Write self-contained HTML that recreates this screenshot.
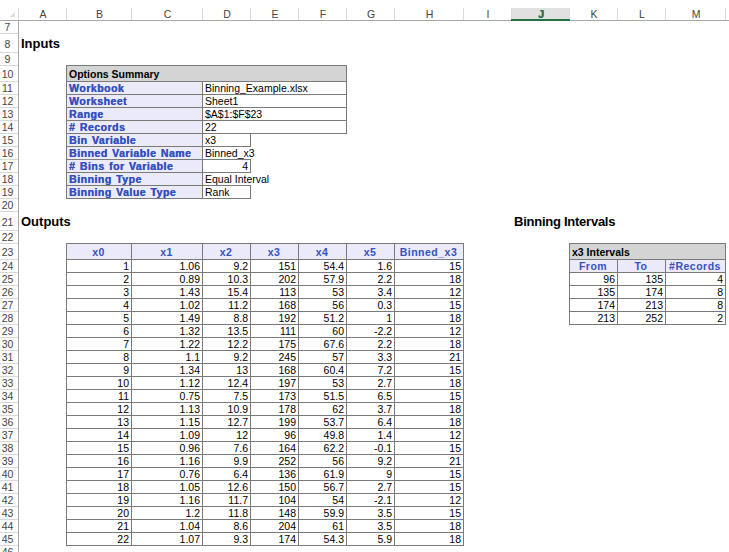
<!DOCTYPE html>
<html><head><meta charset="utf-8"><style>
html,body{margin:0;padding:0;background:#fff;}
body{width:729px;height:552px;position:relative;overflow:hidden;font-family:"Liberation Sans", sans-serif;}
body>div,body>svg{position:absolute;}
</style></head><body>
<div style="left:511px;top:8px;width:59px;height:12px;background:#e1e1e1"></div>
<div style="left:66px;top:8px;width:1px;height:12px;background:#dadada"></div>
<div style="left:131px;top:8px;width:1px;height:12px;background:#dadada"></div>
<div style="left:202px;top:8px;width:1px;height:12px;background:#dadada"></div>
<div style="left:250px;top:8px;width:1px;height:12px;background:#dadada"></div>
<div style="left:298px;top:8px;width:1px;height:12px;background:#dadada"></div>
<div style="left:346px;top:8px;width:1px;height:12px;background:#dadada"></div>
<div style="left:394px;top:8px;width:1px;height:12px;background:#dadada"></div>
<div style="left:463px;top:8px;width:1px;height:12px;background:#dadada"></div>
<div style="left:511px;top:8px;width:1px;height:12px;background:#dadada"></div>
<div style="left:569px;top:8px;width:1px;height:12px;background:#dadada"></div>
<div style="left:617px;top:8px;width:1px;height:12px;background:#dadada"></div>
<div style="left:665px;top:8px;width:1px;height:12px;background:#dadada"></div>
<div style="left:725px;top:8px;width:1px;height:12px;background:#dadada"></div>
<div style="left:18px;top:8px;width:1px;height:12px;background:#dadada"></div>
<div style="left:0px;top:20px;width:730px;height:1px;background:#a8a8a8"></div>
<div style="left:511px;top:19px;width:59px;height:2px;background:#217346"></div>
<div style="left:20px;top:8.91px;width:46px;font-size:10.5px;line-height:10.5px;color:#444;text-align:center;white-space:nowrap;">A</div>
<div style="left:68px;top:8.91px;width:63px;font-size:10.5px;line-height:10.5px;color:#444;text-align:center;white-space:nowrap;">B</div>
<div style="left:133px;top:8.91px;width:69px;font-size:10.5px;line-height:10.5px;color:#444;text-align:center;white-space:nowrap;">C</div>
<div style="left:204px;top:8.91px;width:46px;font-size:10.5px;line-height:10.5px;color:#444;text-align:center;white-space:nowrap;">D</div>
<div style="left:252px;top:8.91px;width:46px;font-size:10.5px;line-height:10.5px;color:#444;text-align:center;white-space:nowrap;">E</div>
<div style="left:300px;top:8.91px;width:46px;font-size:10.5px;line-height:10.5px;color:#444;text-align:center;white-space:nowrap;">F</div>
<div style="left:348px;top:8.91px;width:46px;font-size:10.5px;line-height:10.5px;color:#444;text-align:center;white-space:nowrap;">G</div>
<div style="left:396px;top:8.91px;width:67px;font-size:10.5px;line-height:10.5px;color:#444;text-align:center;white-space:nowrap;">H</div>
<div style="left:465px;top:8.91px;width:46px;font-size:10.5px;line-height:10.5px;color:#444;text-align:center;white-space:nowrap;">I</div>
<div style="left:513px;top:8.91px;width:56px;font-size:10.5px;line-height:10.5px;color:#217346;text-align:center;white-space:nowrap;font-weight:bold;text-shadow:0.4px 0 0 #217346;">J</div>
<div style="left:571px;top:8.91px;width:46px;font-size:10.5px;line-height:10.5px;color:#444;text-align:center;white-space:nowrap;">K</div>
<div style="left:619px;top:8.91px;width:46px;font-size:10.5px;line-height:10.5px;color:#444;text-align:center;white-space:nowrap;">L</div>
<div style="left:667px;top:8.91px;width:58px;font-size:10.5px;line-height:10.5px;color:#444;text-align:center;white-space:nowrap;">M</div>
<svg style="left:10px;top:12px;width:6px;height:6px" width="6" height="6"><polygon points="5,0 5,5 0,5" fill="#dcdcdc"/></svg>
<div style="left:18px;top:20px;width:1px;height:533px;background:#a8a8a8"></div>
<div style="left:0px;top:33px;width:18px;height:1px;background:#d8d8d8"></div>
<div style="left:0px;top:21.91px;width:15px;font-size:10.5px;line-height:10.5px;color:#444;text-align:center;white-space:nowrap;">7</div>
<div style="left:0px;top:52px;width:18px;height:1px;background:#d8d8d8"></div>
<div style="left:0px;top:39.31px;width:15px;font-size:10.5px;line-height:10.5px;color:#444;text-align:center;white-space:nowrap;">8</div>
<div style="left:0px;top:65px;width:18px;height:1px;background:#d8d8d8"></div>
<div style="left:0px;top:53.91px;width:15px;font-size:10.5px;line-height:10.5px;color:#444;text-align:center;white-space:nowrap;">9</div>
<div style="left:0px;top:81px;width:18px;height:1px;background:#d8d8d8"></div>
<div style="left:0px;top:68.91px;width:15px;font-size:10.5px;line-height:10.5px;color:#444;text-align:center;white-space:nowrap;">10</div>
<div style="left:0px;top:94px;width:18px;height:1px;background:#d8d8d8"></div>
<div style="left:0px;top:82.91px;width:15px;font-size:10.5px;line-height:10.5px;color:#444;text-align:center;white-space:nowrap;">11</div>
<div style="left:0px;top:107px;width:18px;height:1px;background:#d8d8d8"></div>
<div style="left:0px;top:95.91px;width:15px;font-size:10.5px;line-height:10.5px;color:#444;text-align:center;white-space:nowrap;">12</div>
<div style="left:0px;top:120px;width:18px;height:1px;background:#d8d8d8"></div>
<div style="left:0px;top:108.91px;width:15px;font-size:10.5px;line-height:10.5px;color:#444;text-align:center;white-space:nowrap;">13</div>
<div style="left:0px;top:133px;width:18px;height:1px;background:#d8d8d8"></div>
<div style="left:0px;top:121.91px;width:15px;font-size:10.5px;line-height:10.5px;color:#444;text-align:center;white-space:nowrap;">14</div>
<div style="left:0px;top:146px;width:18px;height:1px;background:#d8d8d8"></div>
<div style="left:0px;top:134.91px;width:15px;font-size:10.5px;line-height:10.5px;color:#444;text-align:center;white-space:nowrap;">15</div>
<div style="left:0px;top:159px;width:18px;height:1px;background:#d8d8d8"></div>
<div style="left:0px;top:147.91px;width:15px;font-size:10.5px;line-height:10.5px;color:#444;text-align:center;white-space:nowrap;">16</div>
<div style="left:0px;top:172px;width:18px;height:1px;background:#d8d8d8"></div>
<div style="left:0px;top:160.91px;width:15px;font-size:10.5px;line-height:10.5px;color:#444;text-align:center;white-space:nowrap;">17</div>
<div style="left:0px;top:185px;width:18px;height:1px;background:#d8d8d8"></div>
<div style="left:0px;top:173.91px;width:15px;font-size:10.5px;line-height:10.5px;color:#444;text-align:center;white-space:nowrap;">18</div>
<div style="left:0px;top:198px;width:18px;height:1px;background:#d8d8d8"></div>
<div style="left:0px;top:186.91px;width:15px;font-size:10.5px;line-height:10.5px;color:#444;text-align:center;white-space:nowrap;">19</div>
<div style="left:0px;top:211px;width:18px;height:1px;background:#d8d8d8"></div>
<div style="left:0px;top:199.91px;width:15px;font-size:10.5px;line-height:10.5px;color:#444;text-align:center;white-space:nowrap;">20</div>
<div style="left:0px;top:230px;width:18px;height:1px;background:#d8d8d8"></div>
<div style="left:0px;top:217.31px;width:15px;font-size:10.5px;line-height:10.5px;color:#444;text-align:center;white-space:nowrap;">21</div>
<div style="left:0px;top:243px;width:18px;height:1px;background:#d8d8d8"></div>
<div style="left:0px;top:231.91px;width:15px;font-size:10.5px;line-height:10.5px;color:#444;text-align:center;white-space:nowrap;">22</div>
<div style="left:0px;top:259px;width:18px;height:1px;background:#d8d8d8"></div>
<div style="left:0px;top:246.91px;width:15px;font-size:10.5px;line-height:10.5px;color:#444;text-align:center;white-space:nowrap;">23</div>
<div style="left:0px;top:272px;width:18px;height:1px;background:#d8d8d8"></div>
<div style="left:0px;top:260.91px;width:15px;font-size:10.5px;line-height:10.5px;color:#444;text-align:center;white-space:nowrap;">24</div>
<div style="left:0px;top:285px;width:18px;height:1px;background:#d8d8d8"></div>
<div style="left:0px;top:273.91px;width:15px;font-size:10.5px;line-height:10.5px;color:#444;text-align:center;white-space:nowrap;">25</div>
<div style="left:0px;top:298px;width:18px;height:1px;background:#d8d8d8"></div>
<div style="left:0px;top:286.91px;width:15px;font-size:10.5px;line-height:10.5px;color:#444;text-align:center;white-space:nowrap;">26</div>
<div style="left:0px;top:311px;width:18px;height:1px;background:#d8d8d8"></div>
<div style="left:0px;top:299.91px;width:15px;font-size:10.5px;line-height:10.5px;color:#444;text-align:center;white-space:nowrap;">27</div>
<div style="left:0px;top:324px;width:18px;height:1px;background:#d8d8d8"></div>
<div style="left:0px;top:312.91px;width:15px;font-size:10.5px;line-height:10.5px;color:#444;text-align:center;white-space:nowrap;">28</div>
<div style="left:0px;top:337px;width:18px;height:1px;background:#d8d8d8"></div>
<div style="left:0px;top:325.91px;width:15px;font-size:10.5px;line-height:10.5px;color:#444;text-align:center;white-space:nowrap;">29</div>
<div style="left:0px;top:350px;width:18px;height:1px;background:#d8d8d8"></div>
<div style="left:0px;top:338.91px;width:15px;font-size:10.5px;line-height:10.5px;color:#444;text-align:center;white-space:nowrap;">30</div>
<div style="left:0px;top:363px;width:18px;height:1px;background:#d8d8d8"></div>
<div style="left:0px;top:351.91px;width:15px;font-size:10.5px;line-height:10.5px;color:#444;text-align:center;white-space:nowrap;">31</div>
<div style="left:0px;top:376px;width:18px;height:1px;background:#d8d8d8"></div>
<div style="left:0px;top:364.91px;width:15px;font-size:10.5px;line-height:10.5px;color:#444;text-align:center;white-space:nowrap;">32</div>
<div style="left:0px;top:389px;width:18px;height:1px;background:#d8d8d8"></div>
<div style="left:0px;top:377.91px;width:15px;font-size:10.5px;line-height:10.5px;color:#444;text-align:center;white-space:nowrap;">33</div>
<div style="left:0px;top:402px;width:18px;height:1px;background:#d8d8d8"></div>
<div style="left:0px;top:390.91px;width:15px;font-size:10.5px;line-height:10.5px;color:#444;text-align:center;white-space:nowrap;">34</div>
<div style="left:0px;top:415px;width:18px;height:1px;background:#d8d8d8"></div>
<div style="left:0px;top:403.91px;width:15px;font-size:10.5px;line-height:10.5px;color:#444;text-align:center;white-space:nowrap;">35</div>
<div style="left:0px;top:428px;width:18px;height:1px;background:#d8d8d8"></div>
<div style="left:0px;top:416.91px;width:15px;font-size:10.5px;line-height:10.5px;color:#444;text-align:center;white-space:nowrap;">36</div>
<div style="left:0px;top:441px;width:18px;height:1px;background:#d8d8d8"></div>
<div style="left:0px;top:429.91px;width:15px;font-size:10.5px;line-height:10.5px;color:#444;text-align:center;white-space:nowrap;">37</div>
<div style="left:0px;top:454px;width:18px;height:1px;background:#d8d8d8"></div>
<div style="left:0px;top:442.91px;width:15px;font-size:10.5px;line-height:10.5px;color:#444;text-align:center;white-space:nowrap;">38</div>
<div style="left:0px;top:467px;width:18px;height:1px;background:#d8d8d8"></div>
<div style="left:0px;top:455.91px;width:15px;font-size:10.5px;line-height:10.5px;color:#444;text-align:center;white-space:nowrap;">39</div>
<div style="left:0px;top:480px;width:18px;height:1px;background:#d8d8d8"></div>
<div style="left:0px;top:468.91px;width:15px;font-size:10.5px;line-height:10.5px;color:#444;text-align:center;white-space:nowrap;">40</div>
<div style="left:0px;top:493px;width:18px;height:1px;background:#d8d8d8"></div>
<div style="left:0px;top:481.91px;width:15px;font-size:10.5px;line-height:10.5px;color:#444;text-align:center;white-space:nowrap;">41</div>
<div style="left:0px;top:506px;width:18px;height:1px;background:#d8d8d8"></div>
<div style="left:0px;top:494.91px;width:15px;font-size:10.5px;line-height:10.5px;color:#444;text-align:center;white-space:nowrap;">42</div>
<div style="left:0px;top:519px;width:18px;height:1px;background:#d8d8d8"></div>
<div style="left:0px;top:507.91px;width:15px;font-size:10.5px;line-height:10.5px;color:#444;text-align:center;white-space:nowrap;">43</div>
<div style="left:0px;top:532px;width:18px;height:1px;background:#d8d8d8"></div>
<div style="left:0px;top:520.91px;width:15px;font-size:10.5px;line-height:10.5px;color:#444;text-align:center;white-space:nowrap;">44</div>
<div style="left:0px;top:545px;width:18px;height:1px;background:#d8d8d8"></div>
<div style="left:0px;top:533.91px;width:15px;font-size:10.5px;line-height:10.5px;color:#444;text-align:center;white-space:nowrap;">45</div>
<div style="left:0px;top:558px;width:18px;height:1px;background:#d8d8d8"></div>
<div style="left:0px;top:546.91px;width:15px;font-size:10.5px;line-height:10.5px;color:#444;text-align:center;white-space:nowrap;">46</div>
<div style="left:18px;top:36.70px;width:182px;font-size:13px;line-height:13px;color:#000;text-align:left;white-space:nowrap;font-weight:bold;padding-left:3px;box-sizing:border-box;">Inputs</div>
<div style="left:18px;top:214.60px;width:182px;font-size:13px;line-height:13px;color:#000;text-align:left;white-space:nowrap;font-weight:bold;padding-left:3px;box-sizing:border-box;">Outputs</div>
<div style="left:511px;top:214.60px;width:189px;font-size:13px;line-height:13px;color:#000;text-align:left;white-space:nowrap;font-weight:bold;padding-left:3px;box-sizing:border-box;letter-spacing:-0.25px;">Binning Intervals</div>
<div style="left:66px;top:65px;width:280px;height:16px;background:#d4d4d4"></div>
<div style="left:66px;top:68.81px;width:280px;font-size:10.5px;line-height:10.5px;color:#000;text-align:left;white-space:nowrap;font-weight:bold;padding-left:3px;box-sizing:border-box;">Options Summary</div>
<div style="left:66px;top:81px;width:136px;height:13px;background:#eaeaf9"></div>
<div style="left:66px;top:82.91px;width:136px;font-size:10.5px;line-height:10.5px;color:#3350c0;text-align:left;white-space:nowrap;font-weight:bold;padding-left:3px;box-sizing:border-box;letter-spacing:0.5px;word-spacing:1px;text-shadow:0.35px 0 0 #3350c0;">Workbook</div>
<div style="left:202px;top:82.91px;width:198px;font-size:10.5px;line-height:10.5px;color:#000;text-align:left;white-space:nowrap;padding-left:3px;box-sizing:border-box;">Binning_Example.xlsx</div>
<div style="left:66px;top:94px;width:136px;height:13px;background:#eaeaf9"></div>
<div style="left:66px;top:95.91px;width:136px;font-size:10.5px;line-height:10.5px;color:#3350c0;text-align:left;white-space:nowrap;font-weight:bold;padding-left:3px;box-sizing:border-box;letter-spacing:0.5px;word-spacing:1px;text-shadow:0.35px 0 0 #3350c0;">Worksheet</div>
<div style="left:202px;top:95.91px;width:198px;font-size:10.5px;line-height:10.5px;color:#000;text-align:left;white-space:nowrap;padding-left:3px;box-sizing:border-box;">Sheet1</div>
<div style="left:66px;top:107px;width:136px;height:13px;background:#eaeaf9"></div>
<div style="left:66px;top:108.91px;width:136px;font-size:10.5px;line-height:10.5px;color:#3350c0;text-align:left;white-space:nowrap;font-weight:bold;padding-left:3px;box-sizing:border-box;letter-spacing:0.5px;word-spacing:1px;text-shadow:0.35px 0 0 #3350c0;">Range</div>
<div style="left:202px;top:108.91px;width:198px;font-size:10.5px;line-height:10.5px;color:#000;text-align:left;white-space:nowrap;padding-left:3px;box-sizing:border-box;">$A$1:$F$23</div>
<div style="left:66px;top:120px;width:136px;height:13px;background:#eaeaf9"></div>
<div style="left:66px;top:121.91px;width:136px;font-size:10.5px;line-height:10.5px;color:#3350c0;text-align:left;white-space:nowrap;font-weight:bold;padding-left:3px;box-sizing:border-box;letter-spacing:0.5px;word-spacing:1px;text-shadow:0.35px 0 0 #3350c0;"># Records</div>
<div style="left:202px;top:121.91px;width:198px;font-size:10.5px;line-height:10.5px;color:#000;text-align:left;white-space:nowrap;padding-left:3px;box-sizing:border-box;">22</div>
<div style="left:66px;top:133px;width:136px;height:13px;background:#eaeaf9"></div>
<div style="left:66px;top:134.91px;width:136px;font-size:10.5px;line-height:10.5px;color:#3350c0;text-align:left;white-space:nowrap;font-weight:bold;padding-left:3px;box-sizing:border-box;letter-spacing:0.5px;word-spacing:1px;text-shadow:0.35px 0 0 #3350c0;">Bin Variable</div>
<div style="left:202px;top:134.91px;width:198px;font-size:10.5px;line-height:10.5px;color:#000;text-align:left;white-space:nowrap;padding-left:3px;box-sizing:border-box;">x3</div>
<div style="left:66px;top:146px;width:136px;height:13px;background:#eaeaf9"></div>
<div style="left:66px;top:147.91px;width:136px;font-size:10.5px;line-height:10.5px;color:#3350c0;text-align:left;white-space:nowrap;font-weight:bold;padding-left:3px;box-sizing:border-box;letter-spacing:0.5px;word-spacing:1px;text-shadow:0.35px 0 0 #3350c0;">Binned Variable Name</div>
<div style="left:202px;top:147.91px;width:198px;font-size:10.5px;line-height:10.5px;color:#000;text-align:left;white-space:nowrap;padding-left:3px;box-sizing:border-box;">Binned_x3</div>
<div style="left:66px;top:159px;width:136px;height:13px;background:#eaeaf9"></div>
<div style="left:66px;top:160.91px;width:136px;font-size:10.5px;line-height:10.5px;color:#3350c0;text-align:left;white-space:nowrap;font-weight:bold;padding-left:3px;box-sizing:border-box;letter-spacing:0.5px;word-spacing:1px;text-shadow:0.35px 0 0 #3350c0;"># Bins for Variable</div>
<div style="left:202px;top:160.91px;width:48px;font-size:10.5px;line-height:10.5px;color:#000;text-align:right;white-space:nowrap;padding-right:2px;box-sizing:border-box;">4</div>
<div style="left:66px;top:172px;width:136px;height:13px;background:#eaeaf9"></div>
<div style="left:66px;top:173.91px;width:136px;font-size:10.5px;line-height:10.5px;color:#3350c0;text-align:left;white-space:nowrap;font-weight:bold;padding-left:3px;box-sizing:border-box;letter-spacing:0.5px;word-spacing:1px;text-shadow:0.35px 0 0 #3350c0;">Binning Type</div>
<div style="left:202px;top:173.91px;width:198px;font-size:10.5px;line-height:10.5px;color:#000;text-align:left;white-space:nowrap;padding-left:3px;box-sizing:border-box;">Equal Interval</div>
<div style="left:66px;top:185px;width:136px;height:13px;background:#eaeaf9"></div>
<div style="left:66px;top:186.91px;width:136px;font-size:10.5px;line-height:10.5px;color:#3350c0;text-align:left;white-space:nowrap;font-weight:bold;padding-left:3px;box-sizing:border-box;letter-spacing:0.5px;word-spacing:1px;text-shadow:0.35px 0 0 #3350c0;">Binning Value Type</div>
<div style="left:202px;top:186.91px;width:198px;font-size:10.5px;line-height:10.5px;color:#000;text-align:left;white-space:nowrap;padding-left:3px;box-sizing:border-box;">Rank</div>
<div style="left:66px;top:65px;width:281px;height:1px;background:#7a7a7a"></div>
<div style="left:66px;top:81px;width:281px;height:1px;background:#7a7a7a"></div>
<div style="left:66px;top:94px;width:281px;height:1px;background:#7a7a7a"></div>
<div style="left:66px;top:81px;width:1px;height:14px;background:#7a7a7a"></div>
<div style="left:202px;top:81px;width:1px;height:14px;background:#7a7a7a"></div>
<div style="left:346px;top:81px;width:1px;height:14px;background:#7a7a7a"></div>
<div style="left:66px;top:107px;width:281px;height:1px;background:#7a7a7a"></div>
<div style="left:66px;top:94px;width:1px;height:14px;background:#7a7a7a"></div>
<div style="left:202px;top:94px;width:1px;height:14px;background:#7a7a7a"></div>
<div style="left:346px;top:94px;width:1px;height:14px;background:#7a7a7a"></div>
<div style="left:66px;top:120px;width:281px;height:1px;background:#7a7a7a"></div>
<div style="left:66px;top:107px;width:1px;height:14px;background:#7a7a7a"></div>
<div style="left:202px;top:107px;width:1px;height:14px;background:#7a7a7a"></div>
<div style="left:346px;top:107px;width:1px;height:14px;background:#7a7a7a"></div>
<div style="left:66px;top:133px;width:281px;height:1px;background:#7a7a7a"></div>
<div style="left:66px;top:120px;width:1px;height:14px;background:#7a7a7a"></div>
<div style="left:202px;top:120px;width:1px;height:14px;background:#7a7a7a"></div>
<div style="left:346px;top:120px;width:1px;height:14px;background:#7a7a7a"></div>
<div style="left:66px;top:146px;width:185px;height:1px;background:#7a7a7a"></div>
<div style="left:66px;top:133px;width:1px;height:14px;background:#7a7a7a"></div>
<div style="left:202px;top:133px;width:1px;height:14px;background:#7a7a7a"></div>
<div style="left:250px;top:133px;width:1px;height:14px;background:#7a7a7a"></div>
<div style="left:66px;top:159px;width:185px;height:1px;background:#7a7a7a"></div>
<div style="left:66px;top:146px;width:1px;height:14px;background:#7a7a7a"></div>
<div style="left:202px;top:146px;width:1px;height:14px;background:#7a7a7a"></div>
<div style="left:66px;top:172px;width:185px;height:1px;background:#7a7a7a"></div>
<div style="left:66px;top:159px;width:1px;height:14px;background:#7a7a7a"></div>
<div style="left:202px;top:159px;width:1px;height:14px;background:#7a7a7a"></div>
<div style="left:250px;top:159px;width:1px;height:14px;background:#7a7a7a"></div>
<div style="left:66px;top:185px;width:185px;height:1px;background:#7a7a7a"></div>
<div style="left:66px;top:172px;width:1px;height:14px;background:#7a7a7a"></div>
<div style="left:202px;top:172px;width:1px;height:14px;background:#7a7a7a"></div>
<div style="left:66px;top:198px;width:185px;height:1px;background:#7a7a7a"></div>
<div style="left:66px;top:185px;width:1px;height:14px;background:#7a7a7a"></div>
<div style="left:202px;top:185px;width:1px;height:14px;background:#7a7a7a"></div>
<div style="left:250px;top:185px;width:1px;height:14px;background:#7a7a7a"></div>
<div style="left:66px;top:65px;width:1px;height:17px;background:#7a7a7a"></div>
<div style="left:346px;top:65px;width:1px;height:17px;background:#7a7a7a"></div>
<div style="left:66px;top:243px;width:397px;height:16px;background:#eaeaf9"></div>
<div style="left:66px;top:246.81px;width:65px;font-size:10.5px;line-height:10.5px;color:#3452c0;text-align:center;white-space:nowrap;font-weight:bold;letter-spacing:0.5px;">x0</div>
<div style="left:131px;top:246.81px;width:71px;font-size:10.5px;line-height:10.5px;color:#3452c0;text-align:center;white-space:nowrap;font-weight:bold;letter-spacing:0.5px;">x1</div>
<div style="left:202px;top:246.81px;width:48px;font-size:10.5px;line-height:10.5px;color:#3452c0;text-align:center;white-space:nowrap;font-weight:bold;letter-spacing:0.5px;">x2</div>
<div style="left:250px;top:246.81px;width:48px;font-size:10.5px;line-height:10.5px;color:#3452c0;text-align:center;white-space:nowrap;font-weight:bold;letter-spacing:0.5px;">x3</div>
<div style="left:298px;top:246.81px;width:48px;font-size:10.5px;line-height:10.5px;color:#3452c0;text-align:center;white-space:nowrap;font-weight:bold;letter-spacing:0.5px;">x4</div>
<div style="left:346px;top:246.81px;width:48px;font-size:10.5px;line-height:10.5px;color:#3452c0;text-align:center;white-space:nowrap;font-weight:bold;letter-spacing:0.5px;">x5</div>
<div style="left:394px;top:246.81px;width:69px;font-size:10.5px;line-height:10.5px;color:#3452c0;text-align:center;white-space:nowrap;font-weight:bold;letter-spacing:0.5px;">Binned_x3</div>
<div style="left:66px;top:260.91px;width:65px;font-size:10.5px;line-height:10.5px;color:#000;text-align:right;white-space:nowrap;padding-right:2px;box-sizing:border-box;">1</div>
<div style="left:131px;top:260.91px;width:71px;font-size:10.5px;line-height:10.5px;color:#000;text-align:right;white-space:nowrap;padding-right:2px;box-sizing:border-box;">1.06</div>
<div style="left:202px;top:260.91px;width:48px;font-size:10.5px;line-height:10.5px;color:#000;text-align:right;white-space:nowrap;padding-right:2px;box-sizing:border-box;">9.2</div>
<div style="left:250px;top:260.91px;width:48px;font-size:10.5px;line-height:10.5px;color:#000;text-align:right;white-space:nowrap;padding-right:2px;box-sizing:border-box;">151</div>
<div style="left:298px;top:260.91px;width:48px;font-size:10.5px;line-height:10.5px;color:#000;text-align:right;white-space:nowrap;padding-right:2px;box-sizing:border-box;">54.4</div>
<div style="left:346px;top:260.91px;width:48px;font-size:10.5px;line-height:10.5px;color:#000;text-align:right;white-space:nowrap;padding-right:2px;box-sizing:border-box;">1.6</div>
<div style="left:394px;top:260.91px;width:69px;font-size:10.5px;line-height:10.5px;color:#000;text-align:right;white-space:nowrap;padding-right:2px;box-sizing:border-box;">15</div>
<div style="left:66px;top:273.91px;width:65px;font-size:10.5px;line-height:10.5px;color:#000;text-align:right;white-space:nowrap;padding-right:2px;box-sizing:border-box;">2</div>
<div style="left:131px;top:273.91px;width:71px;font-size:10.5px;line-height:10.5px;color:#000;text-align:right;white-space:nowrap;padding-right:2px;box-sizing:border-box;">0.89</div>
<div style="left:202px;top:273.91px;width:48px;font-size:10.5px;line-height:10.5px;color:#000;text-align:right;white-space:nowrap;padding-right:2px;box-sizing:border-box;">10.3</div>
<div style="left:250px;top:273.91px;width:48px;font-size:10.5px;line-height:10.5px;color:#000;text-align:right;white-space:nowrap;padding-right:2px;box-sizing:border-box;">202</div>
<div style="left:298px;top:273.91px;width:48px;font-size:10.5px;line-height:10.5px;color:#000;text-align:right;white-space:nowrap;padding-right:2px;box-sizing:border-box;">57.9</div>
<div style="left:346px;top:273.91px;width:48px;font-size:10.5px;line-height:10.5px;color:#000;text-align:right;white-space:nowrap;padding-right:2px;box-sizing:border-box;">2.2</div>
<div style="left:394px;top:273.91px;width:69px;font-size:10.5px;line-height:10.5px;color:#000;text-align:right;white-space:nowrap;padding-right:2px;box-sizing:border-box;">18</div>
<div style="left:66px;top:286.91px;width:65px;font-size:10.5px;line-height:10.5px;color:#000;text-align:right;white-space:nowrap;padding-right:2px;box-sizing:border-box;">3</div>
<div style="left:131px;top:286.91px;width:71px;font-size:10.5px;line-height:10.5px;color:#000;text-align:right;white-space:nowrap;padding-right:2px;box-sizing:border-box;">1.43</div>
<div style="left:202px;top:286.91px;width:48px;font-size:10.5px;line-height:10.5px;color:#000;text-align:right;white-space:nowrap;padding-right:2px;box-sizing:border-box;">15.4</div>
<div style="left:250px;top:286.91px;width:48px;font-size:10.5px;line-height:10.5px;color:#000;text-align:right;white-space:nowrap;padding-right:2px;box-sizing:border-box;">113</div>
<div style="left:298px;top:286.91px;width:48px;font-size:10.5px;line-height:10.5px;color:#000;text-align:right;white-space:nowrap;padding-right:2px;box-sizing:border-box;">53</div>
<div style="left:346px;top:286.91px;width:48px;font-size:10.5px;line-height:10.5px;color:#000;text-align:right;white-space:nowrap;padding-right:2px;box-sizing:border-box;">3.4</div>
<div style="left:394px;top:286.91px;width:69px;font-size:10.5px;line-height:10.5px;color:#000;text-align:right;white-space:nowrap;padding-right:2px;box-sizing:border-box;">12</div>
<div style="left:66px;top:299.91px;width:65px;font-size:10.5px;line-height:10.5px;color:#000;text-align:right;white-space:nowrap;padding-right:2px;box-sizing:border-box;">4</div>
<div style="left:131px;top:299.91px;width:71px;font-size:10.5px;line-height:10.5px;color:#000;text-align:right;white-space:nowrap;padding-right:2px;box-sizing:border-box;">1.02</div>
<div style="left:202px;top:299.91px;width:48px;font-size:10.5px;line-height:10.5px;color:#000;text-align:right;white-space:nowrap;padding-right:2px;box-sizing:border-box;">11.2</div>
<div style="left:250px;top:299.91px;width:48px;font-size:10.5px;line-height:10.5px;color:#000;text-align:right;white-space:nowrap;padding-right:2px;box-sizing:border-box;">168</div>
<div style="left:298px;top:299.91px;width:48px;font-size:10.5px;line-height:10.5px;color:#000;text-align:right;white-space:nowrap;padding-right:2px;box-sizing:border-box;">56</div>
<div style="left:346px;top:299.91px;width:48px;font-size:10.5px;line-height:10.5px;color:#000;text-align:right;white-space:nowrap;padding-right:2px;box-sizing:border-box;">0.3</div>
<div style="left:394px;top:299.91px;width:69px;font-size:10.5px;line-height:10.5px;color:#000;text-align:right;white-space:nowrap;padding-right:2px;box-sizing:border-box;">15</div>
<div style="left:66px;top:312.91px;width:65px;font-size:10.5px;line-height:10.5px;color:#000;text-align:right;white-space:nowrap;padding-right:2px;box-sizing:border-box;">5</div>
<div style="left:131px;top:312.91px;width:71px;font-size:10.5px;line-height:10.5px;color:#000;text-align:right;white-space:nowrap;padding-right:2px;box-sizing:border-box;">1.49</div>
<div style="left:202px;top:312.91px;width:48px;font-size:10.5px;line-height:10.5px;color:#000;text-align:right;white-space:nowrap;padding-right:2px;box-sizing:border-box;">8.8</div>
<div style="left:250px;top:312.91px;width:48px;font-size:10.5px;line-height:10.5px;color:#000;text-align:right;white-space:nowrap;padding-right:2px;box-sizing:border-box;">192</div>
<div style="left:298px;top:312.91px;width:48px;font-size:10.5px;line-height:10.5px;color:#000;text-align:right;white-space:nowrap;padding-right:2px;box-sizing:border-box;">51.2</div>
<div style="left:346px;top:312.91px;width:48px;font-size:10.5px;line-height:10.5px;color:#000;text-align:right;white-space:nowrap;padding-right:2px;box-sizing:border-box;">1</div>
<div style="left:394px;top:312.91px;width:69px;font-size:10.5px;line-height:10.5px;color:#000;text-align:right;white-space:nowrap;padding-right:2px;box-sizing:border-box;">18</div>
<div style="left:66px;top:325.91px;width:65px;font-size:10.5px;line-height:10.5px;color:#000;text-align:right;white-space:nowrap;padding-right:2px;box-sizing:border-box;">6</div>
<div style="left:131px;top:325.91px;width:71px;font-size:10.5px;line-height:10.5px;color:#000;text-align:right;white-space:nowrap;padding-right:2px;box-sizing:border-box;">1.32</div>
<div style="left:202px;top:325.91px;width:48px;font-size:10.5px;line-height:10.5px;color:#000;text-align:right;white-space:nowrap;padding-right:2px;box-sizing:border-box;">13.5</div>
<div style="left:250px;top:325.91px;width:48px;font-size:10.5px;line-height:10.5px;color:#000;text-align:right;white-space:nowrap;padding-right:2px;box-sizing:border-box;">111</div>
<div style="left:298px;top:325.91px;width:48px;font-size:10.5px;line-height:10.5px;color:#000;text-align:right;white-space:nowrap;padding-right:2px;box-sizing:border-box;">60</div>
<div style="left:346px;top:325.91px;width:48px;font-size:10.5px;line-height:10.5px;color:#000;text-align:right;white-space:nowrap;padding-right:2px;box-sizing:border-box;">-2.2</div>
<div style="left:394px;top:325.91px;width:69px;font-size:10.5px;line-height:10.5px;color:#000;text-align:right;white-space:nowrap;padding-right:2px;box-sizing:border-box;">12</div>
<div style="left:66px;top:338.91px;width:65px;font-size:10.5px;line-height:10.5px;color:#000;text-align:right;white-space:nowrap;padding-right:2px;box-sizing:border-box;">7</div>
<div style="left:131px;top:338.91px;width:71px;font-size:10.5px;line-height:10.5px;color:#000;text-align:right;white-space:nowrap;padding-right:2px;box-sizing:border-box;">1.22</div>
<div style="left:202px;top:338.91px;width:48px;font-size:10.5px;line-height:10.5px;color:#000;text-align:right;white-space:nowrap;padding-right:2px;box-sizing:border-box;">12.2</div>
<div style="left:250px;top:338.91px;width:48px;font-size:10.5px;line-height:10.5px;color:#000;text-align:right;white-space:nowrap;padding-right:2px;box-sizing:border-box;">175</div>
<div style="left:298px;top:338.91px;width:48px;font-size:10.5px;line-height:10.5px;color:#000;text-align:right;white-space:nowrap;padding-right:2px;box-sizing:border-box;">67.6</div>
<div style="left:346px;top:338.91px;width:48px;font-size:10.5px;line-height:10.5px;color:#000;text-align:right;white-space:nowrap;padding-right:2px;box-sizing:border-box;">2.2</div>
<div style="left:394px;top:338.91px;width:69px;font-size:10.5px;line-height:10.5px;color:#000;text-align:right;white-space:nowrap;padding-right:2px;box-sizing:border-box;">18</div>
<div style="left:66px;top:351.91px;width:65px;font-size:10.5px;line-height:10.5px;color:#000;text-align:right;white-space:nowrap;padding-right:2px;box-sizing:border-box;">8</div>
<div style="left:131px;top:351.91px;width:71px;font-size:10.5px;line-height:10.5px;color:#000;text-align:right;white-space:nowrap;padding-right:2px;box-sizing:border-box;">1.1</div>
<div style="left:202px;top:351.91px;width:48px;font-size:10.5px;line-height:10.5px;color:#000;text-align:right;white-space:nowrap;padding-right:2px;box-sizing:border-box;">9.2</div>
<div style="left:250px;top:351.91px;width:48px;font-size:10.5px;line-height:10.5px;color:#000;text-align:right;white-space:nowrap;padding-right:2px;box-sizing:border-box;">245</div>
<div style="left:298px;top:351.91px;width:48px;font-size:10.5px;line-height:10.5px;color:#000;text-align:right;white-space:nowrap;padding-right:2px;box-sizing:border-box;">57</div>
<div style="left:346px;top:351.91px;width:48px;font-size:10.5px;line-height:10.5px;color:#000;text-align:right;white-space:nowrap;padding-right:2px;box-sizing:border-box;">3.3</div>
<div style="left:394px;top:351.91px;width:69px;font-size:10.5px;line-height:10.5px;color:#000;text-align:right;white-space:nowrap;padding-right:2px;box-sizing:border-box;">21</div>
<div style="left:66px;top:364.91px;width:65px;font-size:10.5px;line-height:10.5px;color:#000;text-align:right;white-space:nowrap;padding-right:2px;box-sizing:border-box;">9</div>
<div style="left:131px;top:364.91px;width:71px;font-size:10.5px;line-height:10.5px;color:#000;text-align:right;white-space:nowrap;padding-right:2px;box-sizing:border-box;">1.34</div>
<div style="left:202px;top:364.91px;width:48px;font-size:10.5px;line-height:10.5px;color:#000;text-align:right;white-space:nowrap;padding-right:2px;box-sizing:border-box;">13</div>
<div style="left:250px;top:364.91px;width:48px;font-size:10.5px;line-height:10.5px;color:#000;text-align:right;white-space:nowrap;padding-right:2px;box-sizing:border-box;">168</div>
<div style="left:298px;top:364.91px;width:48px;font-size:10.5px;line-height:10.5px;color:#000;text-align:right;white-space:nowrap;padding-right:2px;box-sizing:border-box;">60.4</div>
<div style="left:346px;top:364.91px;width:48px;font-size:10.5px;line-height:10.5px;color:#000;text-align:right;white-space:nowrap;padding-right:2px;box-sizing:border-box;">7.2</div>
<div style="left:394px;top:364.91px;width:69px;font-size:10.5px;line-height:10.5px;color:#000;text-align:right;white-space:nowrap;padding-right:2px;box-sizing:border-box;">15</div>
<div style="left:66px;top:377.91px;width:65px;font-size:10.5px;line-height:10.5px;color:#000;text-align:right;white-space:nowrap;padding-right:2px;box-sizing:border-box;">10</div>
<div style="left:131px;top:377.91px;width:71px;font-size:10.5px;line-height:10.5px;color:#000;text-align:right;white-space:nowrap;padding-right:2px;box-sizing:border-box;">1.12</div>
<div style="left:202px;top:377.91px;width:48px;font-size:10.5px;line-height:10.5px;color:#000;text-align:right;white-space:nowrap;padding-right:2px;box-sizing:border-box;">12.4</div>
<div style="left:250px;top:377.91px;width:48px;font-size:10.5px;line-height:10.5px;color:#000;text-align:right;white-space:nowrap;padding-right:2px;box-sizing:border-box;">197</div>
<div style="left:298px;top:377.91px;width:48px;font-size:10.5px;line-height:10.5px;color:#000;text-align:right;white-space:nowrap;padding-right:2px;box-sizing:border-box;">53</div>
<div style="left:346px;top:377.91px;width:48px;font-size:10.5px;line-height:10.5px;color:#000;text-align:right;white-space:nowrap;padding-right:2px;box-sizing:border-box;">2.7</div>
<div style="left:394px;top:377.91px;width:69px;font-size:10.5px;line-height:10.5px;color:#000;text-align:right;white-space:nowrap;padding-right:2px;box-sizing:border-box;">18</div>
<div style="left:66px;top:390.91px;width:65px;font-size:10.5px;line-height:10.5px;color:#000;text-align:right;white-space:nowrap;padding-right:2px;box-sizing:border-box;">11</div>
<div style="left:131px;top:390.91px;width:71px;font-size:10.5px;line-height:10.5px;color:#000;text-align:right;white-space:nowrap;padding-right:2px;box-sizing:border-box;">0.75</div>
<div style="left:202px;top:390.91px;width:48px;font-size:10.5px;line-height:10.5px;color:#000;text-align:right;white-space:nowrap;padding-right:2px;box-sizing:border-box;">7.5</div>
<div style="left:250px;top:390.91px;width:48px;font-size:10.5px;line-height:10.5px;color:#000;text-align:right;white-space:nowrap;padding-right:2px;box-sizing:border-box;">173</div>
<div style="left:298px;top:390.91px;width:48px;font-size:10.5px;line-height:10.5px;color:#000;text-align:right;white-space:nowrap;padding-right:2px;box-sizing:border-box;">51.5</div>
<div style="left:346px;top:390.91px;width:48px;font-size:10.5px;line-height:10.5px;color:#000;text-align:right;white-space:nowrap;padding-right:2px;box-sizing:border-box;">6.5</div>
<div style="left:394px;top:390.91px;width:69px;font-size:10.5px;line-height:10.5px;color:#000;text-align:right;white-space:nowrap;padding-right:2px;box-sizing:border-box;">15</div>
<div style="left:66px;top:403.91px;width:65px;font-size:10.5px;line-height:10.5px;color:#000;text-align:right;white-space:nowrap;padding-right:2px;box-sizing:border-box;">12</div>
<div style="left:131px;top:403.91px;width:71px;font-size:10.5px;line-height:10.5px;color:#000;text-align:right;white-space:nowrap;padding-right:2px;box-sizing:border-box;">1.13</div>
<div style="left:202px;top:403.91px;width:48px;font-size:10.5px;line-height:10.5px;color:#000;text-align:right;white-space:nowrap;padding-right:2px;box-sizing:border-box;">10.9</div>
<div style="left:250px;top:403.91px;width:48px;font-size:10.5px;line-height:10.5px;color:#000;text-align:right;white-space:nowrap;padding-right:2px;box-sizing:border-box;">178</div>
<div style="left:298px;top:403.91px;width:48px;font-size:10.5px;line-height:10.5px;color:#000;text-align:right;white-space:nowrap;padding-right:2px;box-sizing:border-box;">62</div>
<div style="left:346px;top:403.91px;width:48px;font-size:10.5px;line-height:10.5px;color:#000;text-align:right;white-space:nowrap;padding-right:2px;box-sizing:border-box;">3.7</div>
<div style="left:394px;top:403.91px;width:69px;font-size:10.5px;line-height:10.5px;color:#000;text-align:right;white-space:nowrap;padding-right:2px;box-sizing:border-box;">18</div>
<div style="left:66px;top:416.91px;width:65px;font-size:10.5px;line-height:10.5px;color:#000;text-align:right;white-space:nowrap;padding-right:2px;box-sizing:border-box;">13</div>
<div style="left:131px;top:416.91px;width:71px;font-size:10.5px;line-height:10.5px;color:#000;text-align:right;white-space:nowrap;padding-right:2px;box-sizing:border-box;">1.15</div>
<div style="left:202px;top:416.91px;width:48px;font-size:10.5px;line-height:10.5px;color:#000;text-align:right;white-space:nowrap;padding-right:2px;box-sizing:border-box;">12.7</div>
<div style="left:250px;top:416.91px;width:48px;font-size:10.5px;line-height:10.5px;color:#000;text-align:right;white-space:nowrap;padding-right:2px;box-sizing:border-box;">199</div>
<div style="left:298px;top:416.91px;width:48px;font-size:10.5px;line-height:10.5px;color:#000;text-align:right;white-space:nowrap;padding-right:2px;box-sizing:border-box;">53.7</div>
<div style="left:346px;top:416.91px;width:48px;font-size:10.5px;line-height:10.5px;color:#000;text-align:right;white-space:nowrap;padding-right:2px;box-sizing:border-box;">6.4</div>
<div style="left:394px;top:416.91px;width:69px;font-size:10.5px;line-height:10.5px;color:#000;text-align:right;white-space:nowrap;padding-right:2px;box-sizing:border-box;">18</div>
<div style="left:66px;top:429.91px;width:65px;font-size:10.5px;line-height:10.5px;color:#000;text-align:right;white-space:nowrap;padding-right:2px;box-sizing:border-box;">14</div>
<div style="left:131px;top:429.91px;width:71px;font-size:10.5px;line-height:10.5px;color:#000;text-align:right;white-space:nowrap;padding-right:2px;box-sizing:border-box;">1.09</div>
<div style="left:202px;top:429.91px;width:48px;font-size:10.5px;line-height:10.5px;color:#000;text-align:right;white-space:nowrap;padding-right:2px;box-sizing:border-box;">12</div>
<div style="left:250px;top:429.91px;width:48px;font-size:10.5px;line-height:10.5px;color:#000;text-align:right;white-space:nowrap;padding-right:2px;box-sizing:border-box;">96</div>
<div style="left:298px;top:429.91px;width:48px;font-size:10.5px;line-height:10.5px;color:#000;text-align:right;white-space:nowrap;padding-right:2px;box-sizing:border-box;">49.8</div>
<div style="left:346px;top:429.91px;width:48px;font-size:10.5px;line-height:10.5px;color:#000;text-align:right;white-space:nowrap;padding-right:2px;box-sizing:border-box;">1.4</div>
<div style="left:394px;top:429.91px;width:69px;font-size:10.5px;line-height:10.5px;color:#000;text-align:right;white-space:nowrap;padding-right:2px;box-sizing:border-box;">12</div>
<div style="left:66px;top:442.91px;width:65px;font-size:10.5px;line-height:10.5px;color:#000;text-align:right;white-space:nowrap;padding-right:2px;box-sizing:border-box;">15</div>
<div style="left:131px;top:442.91px;width:71px;font-size:10.5px;line-height:10.5px;color:#000;text-align:right;white-space:nowrap;padding-right:2px;box-sizing:border-box;">0.96</div>
<div style="left:202px;top:442.91px;width:48px;font-size:10.5px;line-height:10.5px;color:#000;text-align:right;white-space:nowrap;padding-right:2px;box-sizing:border-box;">7.6</div>
<div style="left:250px;top:442.91px;width:48px;font-size:10.5px;line-height:10.5px;color:#000;text-align:right;white-space:nowrap;padding-right:2px;box-sizing:border-box;">164</div>
<div style="left:298px;top:442.91px;width:48px;font-size:10.5px;line-height:10.5px;color:#000;text-align:right;white-space:nowrap;padding-right:2px;box-sizing:border-box;">62.2</div>
<div style="left:346px;top:442.91px;width:48px;font-size:10.5px;line-height:10.5px;color:#000;text-align:right;white-space:nowrap;padding-right:2px;box-sizing:border-box;">-0.1</div>
<div style="left:394px;top:442.91px;width:69px;font-size:10.5px;line-height:10.5px;color:#000;text-align:right;white-space:nowrap;padding-right:2px;box-sizing:border-box;">15</div>
<div style="left:66px;top:455.91px;width:65px;font-size:10.5px;line-height:10.5px;color:#000;text-align:right;white-space:nowrap;padding-right:2px;box-sizing:border-box;">16</div>
<div style="left:131px;top:455.91px;width:71px;font-size:10.5px;line-height:10.5px;color:#000;text-align:right;white-space:nowrap;padding-right:2px;box-sizing:border-box;">1.16</div>
<div style="left:202px;top:455.91px;width:48px;font-size:10.5px;line-height:10.5px;color:#000;text-align:right;white-space:nowrap;padding-right:2px;box-sizing:border-box;">9.9</div>
<div style="left:250px;top:455.91px;width:48px;font-size:10.5px;line-height:10.5px;color:#000;text-align:right;white-space:nowrap;padding-right:2px;box-sizing:border-box;">252</div>
<div style="left:298px;top:455.91px;width:48px;font-size:10.5px;line-height:10.5px;color:#000;text-align:right;white-space:nowrap;padding-right:2px;box-sizing:border-box;">56</div>
<div style="left:346px;top:455.91px;width:48px;font-size:10.5px;line-height:10.5px;color:#000;text-align:right;white-space:nowrap;padding-right:2px;box-sizing:border-box;">9.2</div>
<div style="left:394px;top:455.91px;width:69px;font-size:10.5px;line-height:10.5px;color:#000;text-align:right;white-space:nowrap;padding-right:2px;box-sizing:border-box;">21</div>
<div style="left:66px;top:468.91px;width:65px;font-size:10.5px;line-height:10.5px;color:#000;text-align:right;white-space:nowrap;padding-right:2px;box-sizing:border-box;">17</div>
<div style="left:131px;top:468.91px;width:71px;font-size:10.5px;line-height:10.5px;color:#000;text-align:right;white-space:nowrap;padding-right:2px;box-sizing:border-box;">0.76</div>
<div style="left:202px;top:468.91px;width:48px;font-size:10.5px;line-height:10.5px;color:#000;text-align:right;white-space:nowrap;padding-right:2px;box-sizing:border-box;">6.4</div>
<div style="left:250px;top:468.91px;width:48px;font-size:10.5px;line-height:10.5px;color:#000;text-align:right;white-space:nowrap;padding-right:2px;box-sizing:border-box;">136</div>
<div style="left:298px;top:468.91px;width:48px;font-size:10.5px;line-height:10.5px;color:#000;text-align:right;white-space:nowrap;padding-right:2px;box-sizing:border-box;">61.9</div>
<div style="left:346px;top:468.91px;width:48px;font-size:10.5px;line-height:10.5px;color:#000;text-align:right;white-space:nowrap;padding-right:2px;box-sizing:border-box;">9</div>
<div style="left:394px;top:468.91px;width:69px;font-size:10.5px;line-height:10.5px;color:#000;text-align:right;white-space:nowrap;padding-right:2px;box-sizing:border-box;">15</div>
<div style="left:66px;top:481.91px;width:65px;font-size:10.5px;line-height:10.5px;color:#000;text-align:right;white-space:nowrap;padding-right:2px;box-sizing:border-box;">18</div>
<div style="left:131px;top:481.91px;width:71px;font-size:10.5px;line-height:10.5px;color:#000;text-align:right;white-space:nowrap;padding-right:2px;box-sizing:border-box;">1.05</div>
<div style="left:202px;top:481.91px;width:48px;font-size:10.5px;line-height:10.5px;color:#000;text-align:right;white-space:nowrap;padding-right:2px;box-sizing:border-box;">12.6</div>
<div style="left:250px;top:481.91px;width:48px;font-size:10.5px;line-height:10.5px;color:#000;text-align:right;white-space:nowrap;padding-right:2px;box-sizing:border-box;">150</div>
<div style="left:298px;top:481.91px;width:48px;font-size:10.5px;line-height:10.5px;color:#000;text-align:right;white-space:nowrap;padding-right:2px;box-sizing:border-box;">56.7</div>
<div style="left:346px;top:481.91px;width:48px;font-size:10.5px;line-height:10.5px;color:#000;text-align:right;white-space:nowrap;padding-right:2px;box-sizing:border-box;">2.7</div>
<div style="left:394px;top:481.91px;width:69px;font-size:10.5px;line-height:10.5px;color:#000;text-align:right;white-space:nowrap;padding-right:2px;box-sizing:border-box;">15</div>
<div style="left:66px;top:494.91px;width:65px;font-size:10.5px;line-height:10.5px;color:#000;text-align:right;white-space:nowrap;padding-right:2px;box-sizing:border-box;">19</div>
<div style="left:131px;top:494.91px;width:71px;font-size:10.5px;line-height:10.5px;color:#000;text-align:right;white-space:nowrap;padding-right:2px;box-sizing:border-box;">1.16</div>
<div style="left:202px;top:494.91px;width:48px;font-size:10.5px;line-height:10.5px;color:#000;text-align:right;white-space:nowrap;padding-right:2px;box-sizing:border-box;">11.7</div>
<div style="left:250px;top:494.91px;width:48px;font-size:10.5px;line-height:10.5px;color:#000;text-align:right;white-space:nowrap;padding-right:2px;box-sizing:border-box;">104</div>
<div style="left:298px;top:494.91px;width:48px;font-size:10.5px;line-height:10.5px;color:#000;text-align:right;white-space:nowrap;padding-right:2px;box-sizing:border-box;">54</div>
<div style="left:346px;top:494.91px;width:48px;font-size:10.5px;line-height:10.5px;color:#000;text-align:right;white-space:nowrap;padding-right:2px;box-sizing:border-box;">-2.1</div>
<div style="left:394px;top:494.91px;width:69px;font-size:10.5px;line-height:10.5px;color:#000;text-align:right;white-space:nowrap;padding-right:2px;box-sizing:border-box;">12</div>
<div style="left:66px;top:507.91px;width:65px;font-size:10.5px;line-height:10.5px;color:#000;text-align:right;white-space:nowrap;padding-right:2px;box-sizing:border-box;">20</div>
<div style="left:131px;top:507.91px;width:71px;font-size:10.5px;line-height:10.5px;color:#000;text-align:right;white-space:nowrap;padding-right:2px;box-sizing:border-box;">1.2</div>
<div style="left:202px;top:507.91px;width:48px;font-size:10.5px;line-height:10.5px;color:#000;text-align:right;white-space:nowrap;padding-right:2px;box-sizing:border-box;">11.8</div>
<div style="left:250px;top:507.91px;width:48px;font-size:10.5px;line-height:10.5px;color:#000;text-align:right;white-space:nowrap;padding-right:2px;box-sizing:border-box;">148</div>
<div style="left:298px;top:507.91px;width:48px;font-size:10.5px;line-height:10.5px;color:#000;text-align:right;white-space:nowrap;padding-right:2px;box-sizing:border-box;">59.9</div>
<div style="left:346px;top:507.91px;width:48px;font-size:10.5px;line-height:10.5px;color:#000;text-align:right;white-space:nowrap;padding-right:2px;box-sizing:border-box;">3.5</div>
<div style="left:394px;top:507.91px;width:69px;font-size:10.5px;line-height:10.5px;color:#000;text-align:right;white-space:nowrap;padding-right:2px;box-sizing:border-box;">15</div>
<div style="left:66px;top:520.91px;width:65px;font-size:10.5px;line-height:10.5px;color:#000;text-align:right;white-space:nowrap;padding-right:2px;box-sizing:border-box;">21</div>
<div style="left:131px;top:520.91px;width:71px;font-size:10.5px;line-height:10.5px;color:#000;text-align:right;white-space:nowrap;padding-right:2px;box-sizing:border-box;">1.04</div>
<div style="left:202px;top:520.91px;width:48px;font-size:10.5px;line-height:10.5px;color:#000;text-align:right;white-space:nowrap;padding-right:2px;box-sizing:border-box;">8.6</div>
<div style="left:250px;top:520.91px;width:48px;font-size:10.5px;line-height:10.5px;color:#000;text-align:right;white-space:nowrap;padding-right:2px;box-sizing:border-box;">204</div>
<div style="left:298px;top:520.91px;width:48px;font-size:10.5px;line-height:10.5px;color:#000;text-align:right;white-space:nowrap;padding-right:2px;box-sizing:border-box;">61</div>
<div style="left:346px;top:520.91px;width:48px;font-size:10.5px;line-height:10.5px;color:#000;text-align:right;white-space:nowrap;padding-right:2px;box-sizing:border-box;">3.5</div>
<div style="left:394px;top:520.91px;width:69px;font-size:10.5px;line-height:10.5px;color:#000;text-align:right;white-space:nowrap;padding-right:2px;box-sizing:border-box;">18</div>
<div style="left:66px;top:533.91px;width:65px;font-size:10.5px;line-height:10.5px;color:#000;text-align:right;white-space:nowrap;padding-right:2px;box-sizing:border-box;">22</div>
<div style="left:131px;top:533.91px;width:71px;font-size:10.5px;line-height:10.5px;color:#000;text-align:right;white-space:nowrap;padding-right:2px;box-sizing:border-box;">1.07</div>
<div style="left:202px;top:533.91px;width:48px;font-size:10.5px;line-height:10.5px;color:#000;text-align:right;white-space:nowrap;padding-right:2px;box-sizing:border-box;">9.3</div>
<div style="left:250px;top:533.91px;width:48px;font-size:10.5px;line-height:10.5px;color:#000;text-align:right;white-space:nowrap;padding-right:2px;box-sizing:border-box;">174</div>
<div style="left:298px;top:533.91px;width:48px;font-size:10.5px;line-height:10.5px;color:#000;text-align:right;white-space:nowrap;padding-right:2px;box-sizing:border-box;">54.3</div>
<div style="left:346px;top:533.91px;width:48px;font-size:10.5px;line-height:10.5px;color:#000;text-align:right;white-space:nowrap;padding-right:2px;box-sizing:border-box;">5.9</div>
<div style="left:394px;top:533.91px;width:69px;font-size:10.5px;line-height:10.5px;color:#000;text-align:right;white-space:nowrap;padding-right:2px;box-sizing:border-box;">18</div>
<div style="left:66px;top:259px;width:398px;height:1px;background:#7a7a7a"></div>
<div style="left:66px;top:272px;width:398px;height:1px;background:#7a7a7a"></div>
<div style="left:66px;top:285px;width:398px;height:1px;background:#7a7a7a"></div>
<div style="left:66px;top:298px;width:398px;height:1px;background:#7a7a7a"></div>
<div style="left:66px;top:311px;width:398px;height:1px;background:#7a7a7a"></div>
<div style="left:66px;top:324px;width:398px;height:1px;background:#7a7a7a"></div>
<div style="left:66px;top:337px;width:398px;height:1px;background:#7a7a7a"></div>
<div style="left:66px;top:350px;width:398px;height:1px;background:#7a7a7a"></div>
<div style="left:66px;top:363px;width:398px;height:1px;background:#7a7a7a"></div>
<div style="left:66px;top:376px;width:398px;height:1px;background:#7a7a7a"></div>
<div style="left:66px;top:389px;width:398px;height:1px;background:#7a7a7a"></div>
<div style="left:66px;top:402px;width:398px;height:1px;background:#7a7a7a"></div>
<div style="left:66px;top:415px;width:398px;height:1px;background:#7a7a7a"></div>
<div style="left:66px;top:428px;width:398px;height:1px;background:#7a7a7a"></div>
<div style="left:66px;top:441px;width:398px;height:1px;background:#7a7a7a"></div>
<div style="left:66px;top:454px;width:398px;height:1px;background:#7a7a7a"></div>
<div style="left:66px;top:467px;width:398px;height:1px;background:#7a7a7a"></div>
<div style="left:66px;top:480px;width:398px;height:1px;background:#7a7a7a"></div>
<div style="left:66px;top:493px;width:398px;height:1px;background:#7a7a7a"></div>
<div style="left:66px;top:506px;width:398px;height:1px;background:#7a7a7a"></div>
<div style="left:66px;top:519px;width:398px;height:1px;background:#7a7a7a"></div>
<div style="left:66px;top:532px;width:398px;height:1px;background:#7a7a7a"></div>
<div style="left:66px;top:545px;width:398px;height:1px;background:#7a7a7a"></div>
<div style="left:66px;top:243px;width:398px;height:1px;background:#7a7a7a"></div>
<div style="left:66px;top:243px;width:1px;height:303px;background:#7a7a7a"></div>
<div style="left:131px;top:243px;width:1px;height:303px;background:#7a7a7a"></div>
<div style="left:202px;top:243px;width:1px;height:303px;background:#7a7a7a"></div>
<div style="left:250px;top:243px;width:1px;height:303px;background:#7a7a7a"></div>
<div style="left:298px;top:243px;width:1px;height:303px;background:#7a7a7a"></div>
<div style="left:346px;top:243px;width:1px;height:303px;background:#7a7a7a"></div>
<div style="left:394px;top:243px;width:1px;height:303px;background:#7a7a7a"></div>
<div style="left:463px;top:243px;width:1px;height:303px;background:#7a7a7a"></div>
<div style="left:569px;top:243px;width:156px;height:16px;background:#d4d4d4"></div>
<div style="left:569px;top:246.81px;width:156px;font-size:10.5px;line-height:10.5px;color:#000;text-align:left;white-space:nowrap;font-weight:bold;padding-left:3px;box-sizing:border-box;">x3 Intervals</div>
<div style="left:569px;top:259px;width:156px;height:13px;background:#eaeaf9"></div>
<div style="left:569px;top:260.91px;width:48px;font-size:10.5px;line-height:10.5px;color:#3452c0;text-align:center;white-space:nowrap;font-weight:bold;letter-spacing:0.5px;">From</div>
<div style="left:617px;top:260.91px;width:48px;font-size:10.5px;line-height:10.5px;color:#3452c0;text-align:center;white-space:nowrap;font-weight:bold;letter-spacing:0.5px;">To</div>
<div style="left:665px;top:260.91px;width:60px;font-size:10.5px;line-height:10.5px;color:#3452c0;text-align:center;white-space:nowrap;font-weight:bold;letter-spacing:0.5px;">#Records</div>
<div style="left:569px;top:273.91px;width:48px;font-size:10.5px;line-height:10.5px;color:#000;text-align:right;white-space:nowrap;padding-right:2px;box-sizing:border-box;">96</div>
<div style="left:617px;top:273.91px;width:48px;font-size:10.5px;line-height:10.5px;color:#000;text-align:right;white-space:nowrap;padding-right:2px;box-sizing:border-box;">135</div>
<div style="left:665px;top:273.91px;width:60px;font-size:10.5px;line-height:10.5px;color:#000;text-align:right;white-space:nowrap;padding-right:2px;box-sizing:border-box;">4</div>
<div style="left:569px;top:286.91px;width:48px;font-size:10.5px;line-height:10.5px;color:#000;text-align:right;white-space:nowrap;padding-right:2px;box-sizing:border-box;">135</div>
<div style="left:617px;top:286.91px;width:48px;font-size:10.5px;line-height:10.5px;color:#000;text-align:right;white-space:nowrap;padding-right:2px;box-sizing:border-box;">174</div>
<div style="left:665px;top:286.91px;width:60px;font-size:10.5px;line-height:10.5px;color:#000;text-align:right;white-space:nowrap;padding-right:2px;box-sizing:border-box;">8</div>
<div style="left:569px;top:299.91px;width:48px;font-size:10.5px;line-height:10.5px;color:#000;text-align:right;white-space:nowrap;padding-right:2px;box-sizing:border-box;">174</div>
<div style="left:617px;top:299.91px;width:48px;font-size:10.5px;line-height:10.5px;color:#000;text-align:right;white-space:nowrap;padding-right:2px;box-sizing:border-box;">213</div>
<div style="left:665px;top:299.91px;width:60px;font-size:10.5px;line-height:10.5px;color:#000;text-align:right;white-space:nowrap;padding-right:2px;box-sizing:border-box;">8</div>
<div style="left:569px;top:312.91px;width:48px;font-size:10.5px;line-height:10.5px;color:#000;text-align:right;white-space:nowrap;padding-right:2px;box-sizing:border-box;">213</div>
<div style="left:617px;top:312.91px;width:48px;font-size:10.5px;line-height:10.5px;color:#000;text-align:right;white-space:nowrap;padding-right:2px;box-sizing:border-box;">252</div>
<div style="left:665px;top:312.91px;width:60px;font-size:10.5px;line-height:10.5px;color:#000;text-align:right;white-space:nowrap;padding-right:2px;box-sizing:border-box;">2</div>
<div style="left:569px;top:243px;width:157px;height:1px;background:#7a7a7a"></div>
<div style="left:569px;top:259px;width:157px;height:1px;background:#7a7a7a"></div>
<div style="left:569px;top:272px;width:157px;height:1px;background:#7a7a7a"></div>
<div style="left:569px;top:285px;width:157px;height:1px;background:#7a7a7a"></div>
<div style="left:569px;top:298px;width:157px;height:1px;background:#7a7a7a"></div>
<div style="left:569px;top:311px;width:157px;height:1px;background:#7a7a7a"></div>
<div style="left:569px;top:324px;width:157px;height:1px;background:#7a7a7a"></div>
<div style="left:569px;top:243px;width:1px;height:82px;background:#7a7a7a"></div>
<div style="left:725px;top:243px;width:1px;height:82px;background:#7a7a7a"></div>
<div style="left:617px;top:259px;width:1px;height:66px;background:#7a7a7a"></div>
<div style="left:665px;top:259px;width:1px;height:66px;background:#7a7a7a"></div>
</body></html>
